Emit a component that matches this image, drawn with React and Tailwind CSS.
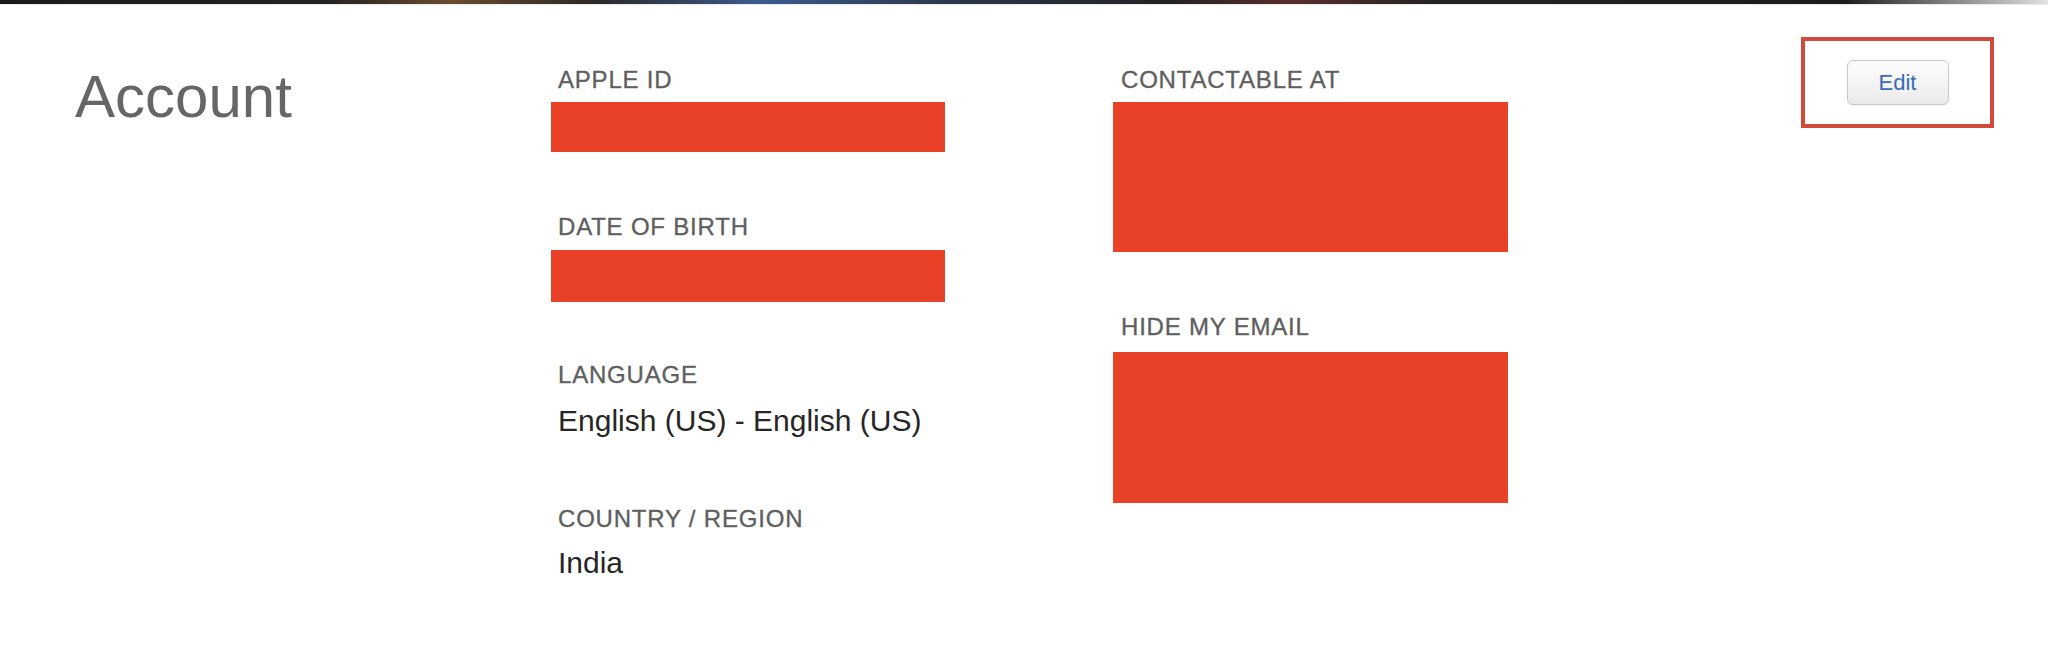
import React from "react";

const font = { fontFamily: '"Liberation Sans", Arial, sans-serif' };

function Label({ children, className = "" }) {
  return (
    <div
      className={
        "text-[24px] leading-[28px] tracking-[0.8px] text-[#5f5f5f] [-webkit-text-stroke:0.35px_#5f5f5f] whitespace-nowrap " +
        className
      }
    >
      {children}
    </div>
  );
}

function Value({ children, className = "" }) {
  return (
    <div className={"text-[30px] leading-[36px] text-[#262626] whitespace-nowrap " + className}>
      {children}
    </div>
  );
}

export default function App() {
  return (
    <div className="min-h-[646px] w-[2048px] bg-white" style={font}>
      <div className="h-[4px] w-full bg-[linear-gradient(to_right,#1a1a1a_0%,#222_16%,#6b4b2e_22%,#2a2826_29%,#3b5b8e_37%,#2b3548_47%,#222_57%,#5a2d2d_63%,#232323_70%,#1b1b1b_90%,#e2e2e2_100%)]" />
      <div className="h-px w-full bg-[#ececec]" />
      <div className="flex items-start pl-[75px] pt-[32px]">
        <div className="w-[476px] mt-[30px] text-[60px] leading-[60px] text-[#666666]">Account</div>

        <div className="w-[562px] mt-[29px] pl-[7px]">
          <Label>APPLE ID</Label>
          <div className="mt-[8px] -ml-[7px] h-[50px] w-[394px] bg-[#e94128]" />
          <Label className="mt-[61px]">DATE OF BIRTH</Label>
          <div className="mt-[9px] -ml-[7px] h-[52px] w-[394px] bg-[#e94128]" />
          <Label className="mt-[59px]">LANGUAGE</Label>
          <Value className="mt-[14px]">English (US) - English (US)</Value>
          <Label className="mt-[66px]">COUNTRY / REGION</Label>
          <Value className="mt-[12px]">India</Value>
        </div>

        <div className="w-[395px] mt-[29px] pl-[8px]">
          <Label>CONTACTABLE AT</Label>
          <div className="mt-[8px] -ml-[8px] h-[150px] w-[395px] bg-[#e94128]" />
          <Label className="mt-[61px]">HIDE MY EMAIL</Label>
          <div className="mt-[11px] -ml-[8px] h-[151px] w-[395px] bg-[#e94128]" />
        </div>

        <div className="ml-auto mr-[54px] flex h-[91px] w-[193px] items-center justify-center border-[4px] border-[#d24a3a]">
          <button className="h-[45px] w-[102px] rounded-[6px] border border-[#c9c9c9] bg-[linear-gradient(to_bottom,#fdfdfd,#ebebeb)] text-[22px] leading-none text-[#3a6cb5] shadow-[0_1px_1px_rgba(0,0,0,0.06)]">
            Edit
          </button>
        </div>
      </div>
    </div>
  );
}
